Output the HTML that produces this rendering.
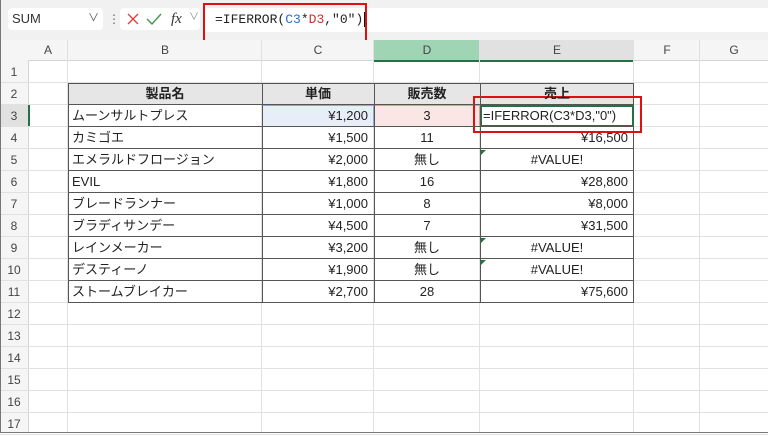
<!DOCTYPE html><html><head><meta charset="utf-8"><style>
body{margin:0;width:768px;height:433px;overflow:hidden;background:#fff;font-family:"Liberation Sans","Noto Sans CJK JP",sans-serif;position:relative}
.a{position:absolute}
.top{left:0;top:0;width:768px;height:40px;background:#f1f1f1}
.cell{position:absolute;font-size:13px;color:#222;line-height:22px;white-space:nowrap}
.hl{position:absolute;height:1px;background:#e1e1e1}
.vl{position:absolute;width:1px;background:#e1e1e1}
</style></head><body>
<div class="a top"></div>
<div class="a" style="left:8px;top:8px;width:95px;height:22px;background:#fff;border-radius:4px"></div>
<div class="cell" style="left:12px;top:8px;font-size:13px;color:#333">SUM</div>
<div class="cell" style="left:88px;top:7px;color:#555;font-size:11px">&#x2228;</div>
<div class="cell" style="left:108px;top:8px;color:#666;font-size:12px">⋮</div>
<div class="a" style="left:120px;top:8px;width:80px;height:22px;background:#fff;border-radius:4px"></div>
<svg class="a" style="left:126px;top:12px" width="14" height="14"><path d="M2 2L12 12M12 2L2 12" stroke="#e04040" stroke-width="1.4"/></svg>
<svg class="a" style="left:146px;top:12px" width="16" height="14"><path d="M1 7L6 12L15 2" stroke="#3a9a4a" stroke-width="1.4" fill="none"/></svg>
<div class="cell" style="left:171px;top:8px;font-family:'Liberation Serif',serif;font-style:italic;font-size:15px;color:#333">fx</div>
<div class="cell" style="left:189px;top:7px;color:#888;font-size:10px">&#x2228;</div>
<div class="a" style="left:204px;top:8px;width:564px;height:24px;background:#fff"></div>
<div class="cell" style="left:215px;top:9px;font-family:'Liberation Mono',monospace;font-size:13px;color:#222">=IFERROR(<span style="color:#2a6fd0">C3</span>*<span style="color:#d03030">D3</span>,"0")<span style="border-left:1px solid #000;margin-left:1px"></span></div>
<div class="a" style="left:203px;top:3px;width:160px;height:35px;border:2px solid #e01010"></div>
<div class="a" style="left:0;top:40px;width:768px;height:20px;background:#f5f5f5;border-bottom:1px solid #d4d4d4"></div>
<div class="a" style="left:374px;top:40px;width:106px;height:20px;background:#9fd5b5;border-bottom:2px solid #217346"></div>
<div class="a" style="left:480px;top:40px;width:154px;height:20px;background:#e1e1e1;border-bottom:2px solid #217346"></div>
<div class="a" style="left:0;top:60px;width:28px;height:373px;background:#f5f5f5;border-right:1px solid #d4d4d4"></div>
<div class="a" style="left:0;top:105px;width:28px;height:22px;background:#e1e1e1;border-right:2px solid #217346"></div>
<div id="g"></div>
<div class="a" style="left:68px;top:83px;width:566px;height:220px;border:1px solid #555;box-sizing:border-box"></div>
<div class="a" style="left:69px;top:84px;width:564px;height:21px;background:#e6e6e6"></div>
<div class="a" style="left:262px;top:105px;width:112px;height:22px;background:#e8eef8;border:1px solid #8aa8d8;box-sizing:border-box"></div>
<div class="a" style="left:374px;top:105px;width:106px;height:22px;background:#fbe6e6;border:1px solid #e09a9a;box-sizing:border-box"></div>
<div class="a" style="left:480px;top:105px;width:154px;height:22px;border:2px solid #217346;box-sizing:border-box;background:#fff"></div>
<div class="a" style="left:473px;top:96px;width:165px;height:33px;border:2px solid #e01010"></div>
<div id="t"></div>
<div class="a" style="left:0;top:0;width:768px;height:433px;border-left:1px solid #777;border-bottom:1px solid #777;box-sizing:border-box"></div>
<script>
var g=document.getElementById('g'),h='';
var cols=[28,68,262,374,480,634,700,768],names=['A','B','C','D','E','F','G'];
for(var i=0;i<7;i++){h+='<div class="vl" style="left:'+(cols[i+1]-1)+'px;top:40px;height:393px;background:'+(i<6?'#e1e1e1':'none')+'"></div>';
h+='<div class="cell" style="left:'+cols[i]+'px;width:'+(cols[i+1]-cols[i])+'px;text-align:center;top:39px;color:#444;font-size:12px">'+names[i]+'</div>';}
for(var r=1;r<=17;r++){var y=61+(r-1)*22;h+='<div class="hl" style="left:0;top:'+(y+21)+'px;width:768px"></div>';
h+='<div class="cell" style="left:0;width:28px;text-align:center;top:'+y+'px;color:#444;font-size:12px">'+r+'</div>';}
g.innerHTML=h;
var d=[['製品名','単価','販売数','売上'],['ムーンサルトプレス','¥1,200','3',''],['カミゴエ','¥1,500','11','¥16,500'],['エメラルドフロージョン','¥2,000','無し','#VALUE!'],['EVIL','¥1,800','16','¥28,800'],['ブレードランナー','¥1,000','8','¥8,000'],['ブラディサンデー','¥4,500','7','¥31,500'],['レインメーカー','¥3,200','無し','#VALUE!'],['デスティーノ','¥1,900','無し','#VALUE!'],['ストームブレイカー','¥2,700','28','¥75,600']];
var t='';
for(var r=0;r<10;r++){var y=83+r*22;
t+='<div class="a" style="left:68px;top:'+(y+21)+'px;width:566px;height:1px;background:#555"></div>';
[262,374,480].forEach(function(x){t+='<div class="a" style="left:'+x+'px;top:'+y+'px;width:1px;height:22px;background:#555"></div>'});
var row=d[r];
if(r==0){t+='<div class="cell" style="left:68px;width:194px;text-align:center;top:'+y+'px;font-weight:bold">'+row[0]+'</div><div class="cell" style="left:262px;width:112px;text-align:center;top:'+y+'px;font-weight:bold">'+row[1]+'</div><div class="cell" style="left:374px;width:106px;text-align:center;top:'+y+'px;font-weight:bold">'+row[2]+'</div><div class="cell" style="left:480px;width:154px;text-align:center;top:'+y+'px;font-weight:bold">'+row[3]+'</div>';continue;}
t+='<div class="cell" style="left:72px;top:'+y+'px">'+row[0]+'</div>';
t+='<div class="cell" style="left:262px;width:106px;text-align:right;top:'+y+'px">'+row[1]+'</div>';
t+='<div class="cell" style="left:374px;width:106px;text-align:center;top:'+y+'px">'+row[2]+'</div>';
if(row[3]=='#VALUE!'){t+='<div class="cell" style="left:480px;width:154px;text-align:center;top:'+y+'px">#VALUE!</div><div class="a" style="left:481px;top:'+(y+1)+'px;width:0;height:0;border-top:5px solid #1e7a3a;border-right:5px solid transparent"></div>';}
else if(row[3])t+='<div class="cell" style="left:480px;width:148px;text-align:right;top:'+y+'px">'+row[3]+'</div>';}
t+='<div class="cell" style="left:483px;top:105px">=IFERROR(C3*D3,"0")</div>';
document.getElementById('t').innerHTML=t;
</script>
</body></html>
